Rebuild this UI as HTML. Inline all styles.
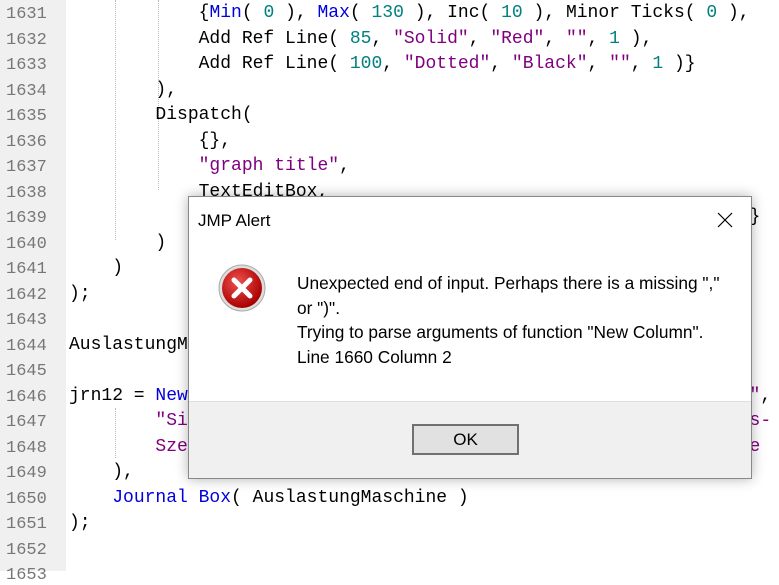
<!DOCTYPE html>
<html><head><style>
body{margin:0;width:779px;height:571px;overflow:hidden;background:#fff;position:relative;font-family:"Liberation Mono",monospace;}
.g{position:absolute;left:0;top:0;width:66px;height:571px;background:#f0f0f0;}
.ln{position:absolute;left:6px;font-size:17px;color:#777;font-family:"Liberation Mono",monospace;}
.c{position:absolute;left:69px;font-size:18px;white-space:pre;color:#000;}
.b{color:#0000e0}.n{color:#008080}.s{color:#800080}
.guide{position:absolute;border-left:1px dotted #bbb;}
.dlg{position:absolute;left:188px;top:196px;width:562px;height:281px;background:#fff;border:1px solid #888;box-shadow:0 0 12px rgba(0,0,0,.3);font-family:"Liberation Sans",sans-serif;}
.foot{position:absolute;left:0;right:0;top:204px;bottom:0;background:#f0f0f0;border-top:1px solid #dfdfdf;}
.ok{position:absolute;left:223px;top:22px;width:107px;border:2px solid #707070;background:#e1e1e1;font-size:17px;text-align:center;line-height:27px;box-sizing:border-box;height:31px;}
.msg{position:absolute;left:108px;top:74px;font-size:17.3px;line-height:24.5px;color:#000;}
</style></head><body>
<div class="g"></div>
<div class="guide" style="left:115px;top:0;height:240px"></div>
<div class="guide" style="left:158px;top:0;height:190px"></div>
<div class="guide" style="left:115px;top:408px;height:50px"></div>
<div id="lines"></div>
<script>
var L=[
['1631','            {<span class="b">Min</span>( <span class="n">0</span> ), <span class="b">Max</span>( <span class="n">130</span> ), Inc( <span class="n">10</span> ), Minor Ticks( <span class="n">0</span> ),'],
['1632','            Add Ref Line( <span class="n">85</span>, <span class="s">"Solid"</span>, <span class="s">"Red"</span>, <span class="s">""</span>, <span class="n">1</span> ),'],
['1633','            Add Ref Line( <span class="n">100</span>, <span class="s">"Dotted"</span>, <span class="s">"Black"</span>, <span class="s">""</span>, <span class="n">1</span> )}'],
['1634','        ),'],
['1635','        Dispatch('],
['1636','            {},'],
['1637','            <span class="s">"graph title"</span>,'],
['1638','            TextEditBox,'],
['1639','            xxxxxxxxxxxxxxxxxxxxxxxxxxxxxxxxxxxxxxxxxxxxxxxxx )}'],
['1640','        )'],
['1641','    )'],
['1642',');'],
['1643',''],
['1644','AuslastungM'],
['1645',''],
['1646','jrn12 = <span class="b">New</span> xxxxxxxxxxxxxxxxxxxxxxxxxxxxxxxxxxxxxxxxxxxxxxxxxxx<span class="s">"</span>,'],
['1647','        <span class="s">"Si                                                   ns-</span>'],
['1648','        <span class="s">Sze                                                  age</span>'],
['1649','    ),'],
['1650','    <span class="b">Journal Box</span>( AuslastungMaschine )'],
['1651',');'],
['1652',''],
['1653','']];
var h='';
L.forEach(function(l,i){var y=3+i*25.5;h+='<div class="ln" style="top:'+(y+2)+'px">'+l[0]+'</div><div class="c" style="top:'+y+'px">'+l[1]+'</div>';});
document.getElementById('lines').innerHTML=h;
</script>
<div class="dlg">
<div style="position:absolute;left:9px;top:14px;font-size:17px;">JMP Alert</div>
<svg style="position:absolute;left:528px;top:15px" width="16" height="16"><path d="M1 1L15 15M15 1L1 15" stroke="#000" stroke-width="1.2"/></svg>
<svg style="position:absolute;left:28px;top:66px" width="50" height="50"><defs><radialGradient id="r" cx="40%" cy="35%" r="65%"><stop offset="0" stop-color="#f05050"/><stop offset="1" stop-color="#a80000"/></radialGradient></defs><circle cx="25" cy="25" r="23" fill="#ddd" stroke="#aaa"/><circle cx="25" cy="25" r="20" fill="url(#r)"/><path d="M17 17L33 33M33 17L17 33" stroke="#fff" stroke-width="5" stroke-linecap="round"/></svg>
<div class="msg">Unexpected end of input. Perhaps there is a missing ","<br>or ")".<br>Trying to parse arguments of function "New Column".<br>Line 1660 Column 2</div>
<div class="foot"><div class="ok">OK</div></div>
</div>
</body></html>
